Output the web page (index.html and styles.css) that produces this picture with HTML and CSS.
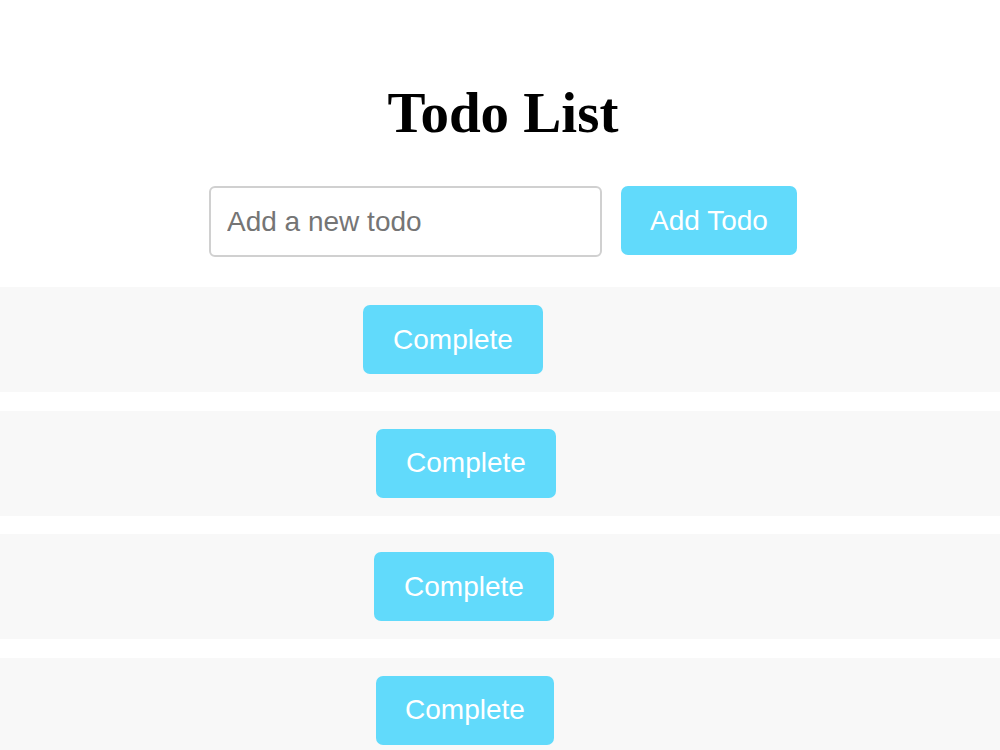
FILE: index.html
```html
<!DOCTYPE html>
<html lang="en">
<head>
<meta charset="utf-8">
<title>Todo List</title>
<link rel="stylesheet" href="styles.css">
</head>
<body>
<div class="app">
  <header class="header">
    <h1 class="title">Todo List</h1>
    <form class="add-form">
      <input class="todo-input" type="text" placeholder="Add a new todo">
      <button class="btn add-btn" type="button">Add Todo</button>
    </form>
  </header>
  <ul class="todo-list">
    <li class="todo-item"><button class="btn complete-btn" type="button">Complete</button></li>
    <li class="todo-item"><button class="btn complete-btn" type="button">Complete</button></li>
    <li class="todo-item"><button class="btn complete-btn" type="button">Complete</button></li>
    <li class="todo-item"><button class="btn complete-btn" type="button">Complete</button></li>
  </ul>
</div>
</body>
</html>
```

FILE: styles.css
```css
html, body {
  margin: 0;
  padding: 0;
  background: #ffffff;
}

body {
  font-family: "Liberation Sans", Arial, sans-serif;
}

.app {
  padding-top: 80px;
}

.header {
  display: flex;
  flex-direction: column;
  align-items: center;
  padding-left: 6px;
}

.title {
  margin: 0;
  font-family: "Liberation Serif", "Times New Roman", serif;
  font-weight: bold;
  font-size: 57px;
  line-height: normal;
  color: #000;
}

.add-form {
  display: flex;
  align-items: flex-start;
  gap: 19px;
  margin-top: 41px;
}

.todo-input {
  box-sizing: border-box;
  width: 393px;
  height: 71px;
  padding: 0 16px;
  border: 2px solid #d0d0d0;
  border-radius: 6px;
  font-family: "Liberation Sans", Arial, sans-serif;
  font-size: 28px;
  color: #333;
  background: #fff;
  outline: none;
}

.todo-input::placeholder {
  color: #757575;
}

.btn {
  border: none;
  background: #61dafb;
  color: #ffffff;
  font-family: "Liberation Sans", Arial, sans-serif;
  font-size: 28px;
  line-height: 32px;
  border-radius: 7px;
  cursor: pointer;
}

.add-btn {
  height: 69px;
  width: 176px;
  padding: 0;
}

.todo-list {
  list-style: none;
  margin: 30px 0 0 0;
  padding: 0;
  display: flex;
  flex-direction: column;
  gap: 18.5px;
}

.todo-item {
  display: flex;
  align-items: center;
  padding: 18px 0;
  background: #f8f8f8;
}

.complete-btn {
  width: 180px;
  height: 69px;
  padding: 0;
}

.todo-item:nth-child(1) .complete-btn { margin-left: 363px; }
.todo-item:nth-child(2) .complete-btn { margin-left: 376px; }
.todo-item:nth-child(3) .complete-btn { margin-left: 374px; }
.todo-item:nth-child(4) .complete-btn { margin-left: 376px; width: 178px; }
```
